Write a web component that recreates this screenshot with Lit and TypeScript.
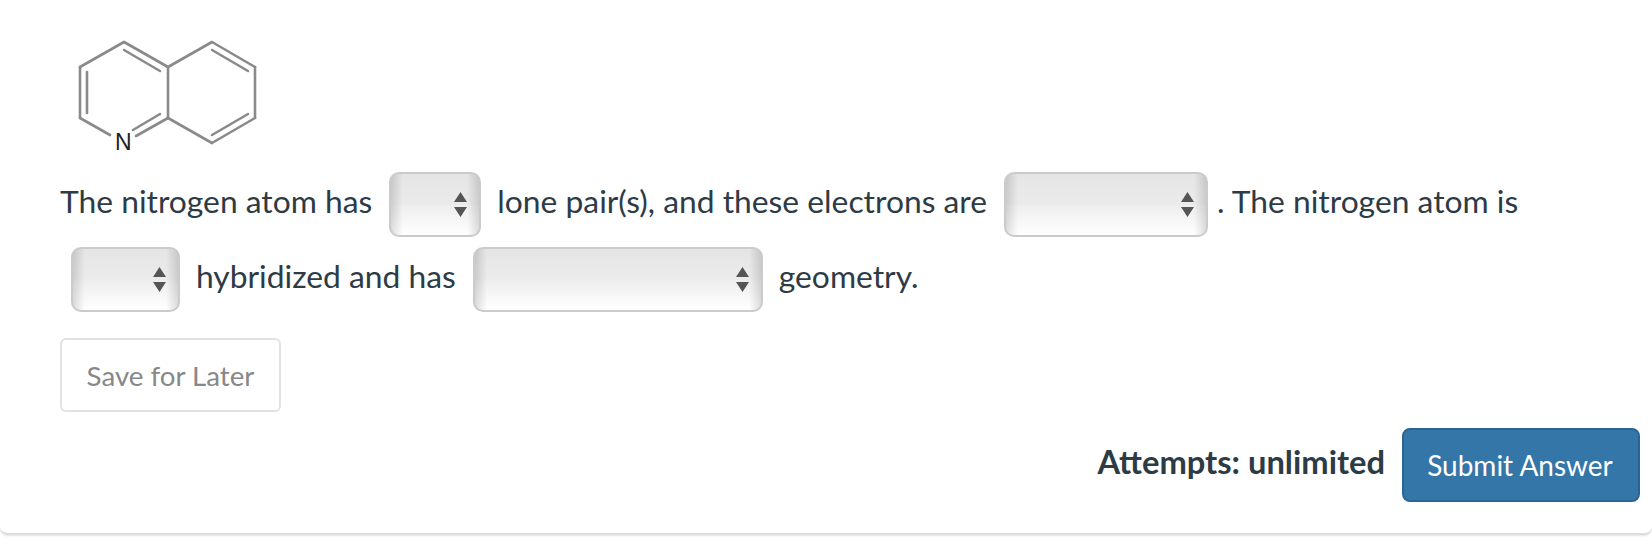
import { LitElement, html, css } from "lit";
import { customElement, property } from "lit/decorators.js";

@customElement("fake-select")
class FakeSelect extends LitElement {
  @property({ type: Number }) width = 91;
  static styles = css`
    :host { display: inline-block; vertical-align: middle; margin: 0 16px 0 17px; position: relative; }
    :host(.lead) { margin-left: 11px; }
    :host(.tight) { margin-right: 9px; }
    .wrap { position: relative; display: block; height: 65px; }
    select {
      appearance: none; -webkit-appearance: none; display: block; height: 65px; width: 100%;
      box-sizing: border-box; margin: 0; padding: 0; border: 2px solid #cbcbcb; border-radius: 10px;
      background:
        linear-gradient(to right, rgba(0,0,0,.13), rgba(0,0,0,0) 12px),
        linear-gradient(to left, rgba(0,0,0,.13), rgba(0,0,0,0) 12px),
        linear-gradient(to bottom, #e5e5e5 0%, #ebebeb 50%, #eeeeee 52%, #fefefe 97%);
    }
    svg { position: absolute; right: 14px; top: 20px; width: 13px; height: 25px; pointer-events: none; }
  `;
  render() {
    return html`<span class="wrap" style="width:${this.width}px">
      <select aria-label="answer"></select>
      <svg viewBox="0 0 13 25"><path d="M6.5 0 L13 10 L0 10 Z M0 15 L13 15 L6.5 25 Z" fill="#555"></path></svg>
    </span>`;
  }
}

@customElement("app-root")
class AppRoot extends LitElement {
  static styles = css`
    :host { display: block; width: 1652px; height: 544px; background: #fff; font-family: Lato, sans-serif; color: #2d3b45; overflow: hidden; }
    .card { box-sizing: border-box; height: 535px; background: #fff; border-radius: 0 0 8px 8px; border-bottom: 2px solid #ddd; box-shadow: 0 1px 2px #e4e4e4; padding: 34px 12px 0 60px; }
    .mol { display: block; width: 200px; height: 124px; margin-bottom: -4px; }
    .q { font-size: 31.8px; line-height: 75px; margin: 10px 0 0 0; width: 1560px; }
    .save { display: block; box-sizing: border-box; width: 221px; height: 74px; border: 2px solid #e2e2e2; border-radius: 6px; background: #fff; color: #888; font: 27.7px Lato, sans-serif; margin: 24px 0 0 0; padding: 0; }
    .foot { display: flex; justify-content: flex-end; align-items: center; gap: 17px; margin-top: 16px; }
    .attempts { font-weight: 700; font-size: 32.7px; margin-top: -8px; }
    .submit { box-sizing: border-box; width: 238px; height: 74px; background: #3476a8; border: 2px solid #2a6595; border-radius: 8px; color: #fff; font: 28px Lato, sans-serif; padding: 0 2px 0 0; }
    .bonds { filter: blur(0.5px); }
    line { stroke: #8a8a8a; stroke-width: 2.6; stroke-linecap: round; }
    text { font: 23px "Liberation Sans", sans-serif; fill: #222; }
  `;
  render() {
    return html`<div class="card">
      <svg class="mol" viewBox="60 34 200 124" aria-label="quinoline">
        <g class="bonds">
        <line x1="124" y1="42" x2="80" y2="67"></line>
        <line x1="80" y1="67" x2="80" y2="118"></line>
        <line x1="80" y1="118" x2="110" y2="135"></line>
        <line x1="124" y1="42" x2="168" y2="67"></line>
        <line x1="168" y1="67" x2="168" y2="118"></line>
        <line x1="168" y1="67" x2="212" y2="42"></line>
        <line x1="212" y1="42" x2="255" y2="67"></line>
        <line x1="255" y1="67" x2="255" y2="118"></line>
        <line x1="255" y1="118" x2="212" y2="143"></line>
        <line x1="212" y1="143" x2="168" y2="118"></line>
        <line x1="168" y1="118" x2="136" y2="136"></line>
        <line x1="160" y1="114" x2="133" y2="130"></line>
        <line x1="87" y1="72" x2="87" y2="113"></line>
        <line x1="124" y1="50" x2="160" y2="71"></line>
        <line x1="212" y1="50" x2="248" y2="71"></line>
        <line x1="212" y1="135" x2="248" y2="114"></line>
        </g>
        <text x="115" y="150">N</text>
      </svg>
      <div class="q">The nitrogen atom has<fake-select width="92"></fake-select>lone pair(s), and these electrons are<fake-select class="tight" width="204"></fake-select>. The nitrogen atom is<br><fake-select class="lead" width="109"></fake-select>hybridized and has<fake-select width="290"></fake-select>geometry.</div>
      <button class="save">Save for Later</button>
      <div class="foot"><span class="attempts">Attempts: unlimited</span><button class="submit">Submit Answer</button></div>
    </div>`;
  }
}
